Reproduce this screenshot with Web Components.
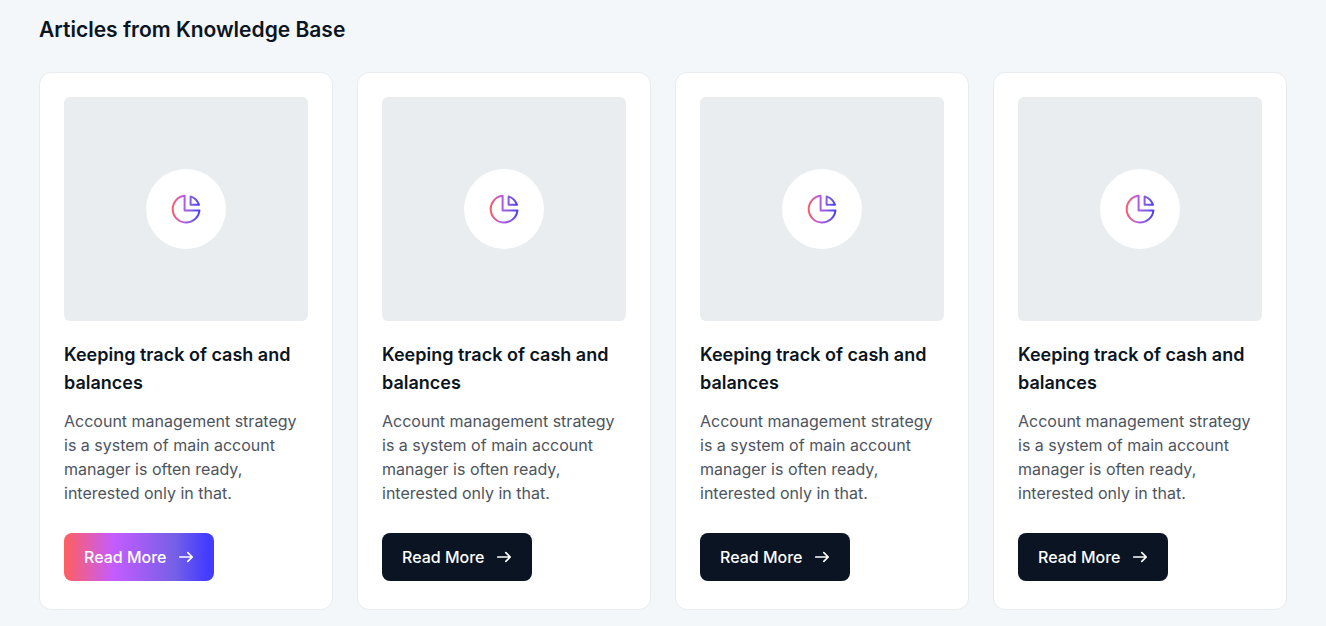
<!DOCTYPE html>
<html lang="en">
<head>
<meta charset="UTF-8">
<meta name="viewport" content="width=device-width, initial-scale=1">
<title>Knowledge Base</title>
<style>
  body {
    margin: 0;
    background: #f3f7fa;
    color: #0b1422;
    font-family: Inter, sans-serif;
  }
</style>
</head>
<body>
<article-section heading="Articles from Knowledge Base">
  <article-card heading="Keeping track of cash and balances" variant="gradient">
    Account management strategy is a system of main account manager is often ready, interested only in that.
  </article-card>
  <article-card heading="Keeping track of cash and balances">
    Account management strategy is a system of main account manager is often ready, interested only in that.
  </article-card>
  <article-card heading="Keeping track of cash and balances">
    Account management strategy is a system of main account manager is often ready, interested only in that.
  </article-card>
  <article-card heading="Keeping track of cash and balances">
    Account management strategy is a system of main account manager is often ready, interested only in that.
  </article-card>
</article-section>

<script>
class PieIcon extends HTMLElement {
    constructor() {
        super()
        this.attachShadow({ mode: 'open' })
    }

    connectedCallback() {
        this.shadowRoot.innerHTML = `
      <style>
        :host {
          display: block;
          width: 32px;
          height: 32px;
        }

        svg {
          display: block;
        }
      </style>

      <svg width="32" height="32" viewBox="0 0 32 32" fill="none" aria-hidden="true">
        <defs>
          <linearGradient id="stroke" gradientUnits="userSpaceOnUse" x1="2" y1="0" x2="30" y2="0">
            <stop offset="0" stop-color="#fb5c62"/>
            <stop offset="0.4" stop-color="#b95ce6"/>
            <stop offset="0.74" stop-color="#7a5be0"/>
            <stop offset="1" stop-color="#433bff"/>
          </linearGradient>
        </defs>
        <g stroke="url(#stroke)" stroke-width="2" stroke-linejoin="round">
          <path d="M14.6 2.8A13.4 13.4 0 1 0 29.4 17.6H14.6z"/>
          <path d="M20.6 3.4A13.4 13.4 0 0 1 29 11.8H20.6z"/>
        </g>
      </svg>
    `
    }
}

class ActionButton extends HTMLElement {
    constructor() {
        super()
        this.attachShadow({ mode: 'open' })
    }

    connectedCallback() {
        this.shadowRoot.innerHTML = `
      <style>
        :host {
          display: inline-block;
        }

        button {
          display: flex;
          align-items: center;
          gap: 9px;
          height: 48px;
          padding: 0 18px 0 20px;
          border: 0;
          border-radius: 8px;
          background: #0b1422;
          color: #fff;
          font: 500 16px/24px Inter, sans-serif;
          cursor: pointer;
        }

        :host([variant="gradient"]) button {
          background: linear-gradient(90deg, #ff5f5f 0%, #c45cff 33%, #7560e6 74%, #433bff 96%);
        }
      </style>

      <button type="button">
        <slot></slot>
        <svg width="20" height="20" viewBox="0 0 20 20" fill="none" stroke="currentColor"
          stroke-width="1.7" stroke-linecap="round" stroke-linejoin="round" aria-hidden="true">
          <path d="M3.8 10H16.2M11.8 5.6L16.2 10L11.8 14.4"/>
        </svg>
      </button>
    `
    }
}

class ArticleCard extends HTMLElement {
    constructor() {
        super()
        this.attachShadow({ mode: 'open' })
    }

    connectedCallback() {
        this.shadowRoot.innerHTML = `
      <style>
        :host {
          display: block;
          box-sizing: border-box;
          padding: 24px 24px 28px;
          background: #fff;
          border: 1px solid #e8ecef;
          border-radius: 12px;
        }

        .preview {
          display: grid;
          place-items: center;
          height: 224px;
          border-radius: 6px;
          background: #e9edf0;
        }

        .disc {
          display: grid;
          place-items: center;
          width: 80px;
          height: 80px;
          border-radius: 50%;
          background: #fff;
        }

        h3 {
          margin: 20px 0 12px;
          font-size: 18px;
          line-height: 28px;
          font-weight: 600;
        }

        p {
          margin: 0 0 28px;
          color: #4d545e;
          font-size: 16px;
          line-height: 24px;
        }

        action-button {
          display: block;
        }
      </style>

      <div class="preview">
        <div class="disc"><pie-icon></pie-icon></div>
      </div>
      <h3>${this.getAttribute('heading')}</h3>
      <p><slot></slot></p>
      <action-button variant="${this.getAttribute('variant') || 'dark'}">Read More</action-button>
    `
    }
}

class ArticleSection extends HTMLElement {
    constructor() {
        super()
        this.attachShadow({ mode: 'open' })
    }

    connectedCallback() {
        this.shadowRoot.innerHTML = `
      <style>
        :host {
          display: block;
          padding: 16px 39px;
        }

        h2 {
          margin: 0 0 28px;
          font-size: 21px;
          line-height: 28px;
          font-weight: 600;
        }

        .cards {
          display: grid;
          grid-template-columns: repeat(auto-fit, minmax(260px, 1fr));
          gap: 24px;
        }
      </style>

      <h2>${this.getAttribute('heading')}</h2>
      <div class="cards"><slot></slot></div>
    `
    }
}

customElements.define('pie-icon', PieIcon)
customElements.define('action-button', ActionButton)
customElements.define('article-card', ArticleCard)
customElements.define('article-section', ArticleSection)
</script>
</body>
</html>
